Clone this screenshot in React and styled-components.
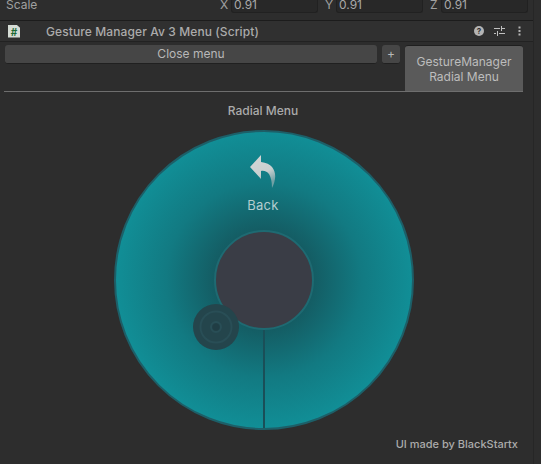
import React from "react";
import styled, { createGlobalStyle } from "styled-components";

const Global = createGlobalStyle`
  html, body {
    margin: 0;
    padding: 0;
    background: #2d2d2d;
  }
  body {
    font-family: Inter, "Noto Sans", sans-serif;
    color: #bdbdbd;
  }
`;

const Page = styled.div`
  width: 541px;
  height: 464px;
  overflow: hidden;
  background: #2d2d2d;
`;

const Panel = styled.div`
  width: 534px;
  height: 100%;
  box-sizing: border-box;
  display: flex;
  flex-direction: column;
  border-right: 1px solid #262626;
`;

const ScaleRow = styled.div`
  height: 13px;
  display: flex;
  align-items: flex-start;
  gap: 7px;
  padding: 0 5px 0 6px;
  font-size: 12px;
  line-height: 10px;
  color: #a0a0a0;
`;

const ScaleLabel = styled.span`
  flex: 1;
`;

const Axis = styled.div`
  display: flex;
  width: 98px;
`;

const AxisName = styled.span`
  width: 11px;
`;

const AxisField = styled.div`
  flex: 1;
  height: 13px;
  box-sizing: border-box;
  padding-left: 2px;
  background: #282828;
  border: 1px solid #212121;
  border-top: none;
  border-radius: 0 0 3px 3px;
  color: #a8a8a8;
`;

const Header = styled.div`
  height: 22px;
  box-sizing: border-box;
  margin-top: 7px;
  display: flex;
  align-items: center;
  padding: 0 12px 0 8px;
  background: #303030;
  border-top: 1px solid #1c1c1c;
  border-bottom: 1px solid #222222;
`;

const ScriptIcon = styled.div`
  width: 12px;
  height: 13px;
  background: #d5dcd5;
  clip-path: polygon(0 0, 70% 0, 100% 25%, 100% 100%, 0 100%);
  color: #1d6b35;
  font-size: 10px;
  font-weight: 700;
  line-height: 14px;
  text-align: center;
`;

const HeaderTitle = styled.span`
  margin-left: 26px;
  flex: 1;
  font-size: 12px;
  font-weight: 500;
  color: #ababab;
  letter-spacing: 0.1px;
`;

const HeaderIcons = styled.div`
  display: flex;
  align-items: center;
  gap: 10px;
`;

const Toolbar = styled.div`
  display: flex;
  height: 50px;
  box-sizing: border-box;
  margin: 0 10px 0 4px;
  padding: 3px 0 0 1px;
  border-bottom: 1px solid #6e6e6e;
`;

const CloseButton = styled.div`
  width: 372px;
  height: 18px;
  line-height: 18px;
  text-align: center;
  font-size: 12px;
  color: #b8b8b8;
  background: #464646;
  border-radius: 3px;
  border-bottom: 1px solid #202020;
`;

const PlusButton = styled.div`
  width: 18px;
  height: 18px;
  margin-left: 5px;
  line-height: 17px;
  text-align: center;
  font-size: 12px;
  color: #b8b8b8;
  background: #464646;
  border-radius: 3px;
  border-bottom: 1px solid #202020;
`;

const TabButton = styled.div`
  width: 118px;
  height: 46px;
  margin-left: 5px;
  box-sizing: border-box;
  padding-top: 8px;
  text-align: center;
  font-size: 12px;
  line-height: 15px;
  color: #bdbdbd;
  background: #5a5a5a;
  border-radius: 3px 3px 0 0;
  border-top: 1px solid #1f1f1f;
`;

const Heading = styled.div`
  margin-top: 11px;
  width: 526px;
  text-align: center;
  font-size: 12px;
  line-height: 15px;
  font-weight: 500;
  color: #ababab;
`;

const Stage = styled.div`
  flex: 1;
  position: relative;
`;

const Wheel = styled.div`
  position: absolute;
  left: 114px;
  top: 12px;
  width: 300px;
  height: 300px;
  box-sizing: border-box;
  border-radius: 50%;
  border: 2px solid #1d5f68;
  background: radial-gradient(circle closest-side at 50% 50%, #123f45 0%, #145c63 33%, #127a82 66%, #118e96 100%);
  overflow: hidden;
`;

const Divider = styled.div`
  position: absolute;
  left: 147px;
  top: 197px;
  bottom: 0;
  width: 2px;
  background: #1a4f58;
`;

const Hub = styled.div`
  position: absolute;
  left: 98px;
  top: 98px;
  width: 100px;
  height: 100px;
  box-sizing: border-box;
  border-radius: 50%;
  border: 2px solid #1e6a72;
  background: #3a3d46;
`;

const BackItem = styled.div`
  position: absolute;
  left: 0;
  right: 2px;
  top: 23px;
  display: flex;
  flex-direction: column;
  align-items: center;
  gap: 8px;
  font-size: 13px;
  color: #b4cdd0;
  letter-spacing: 0.3px;
`;

const Knob = styled.div`
  position: absolute;
  left: 77px;
  top: 172px;
  width: 46px;
  height: 46px;
  border-radius: 50%;
  background: #24454c;
  display: flex;
  align-items: center;
  justify-content: center;
`;

const Credit = styled.div`
  position: absolute;
  right: 15px;
  bottom: 13px;
  font-size: 11px;
  font-weight: 500;
  color: #ababab;
`;

const DotsIcon = styled.svg`
  margin-left: 3px;
`;

const BackIcon = () => (
  <svg width="30" height="34" viewBox="0 0 30 34">
    <defs>
      <linearGradient id="backFade" x1="0" y1="0" x2="0.4" y2="1">
        <stop offset="0" stopColor="#d6d6d6" />
        <stop offset="0.65" stopColor="#c9d0d0" />
        <stop offset="1" stopColor="#6fa0a4" />
      </linearGradient>
    </defs>
    <path
      d="M13 0 L2 12 L13 24 L13 16 C19 15 24 19 24 33 C29 24 30 9 13 7 Z"
      fill="url(#backFade)"
    />
  </svg>
);

const QuestionIcon = () => (
  <svg width="10" height="10" viewBox="0 0 10 10">
    <circle cx="5" cy="5" r="5" fill="#b4b4b4" />
    <text x="5" y="8" fontSize="8" fontWeight="700" textAnchor="middle" fill="#303030" fontFamily="Inter, sans-serif">?</text>
  </svg>
);

const SlidersIcon = () => (
  <svg width="11" height="10" viewBox="0 0 11 10" fill="#c0c0c0">
    <rect x="0" y="2" width="6" height="1" />
    <rect x="8" y="2" width="3" height="1" />
    <rect x="7" y="0" width="1" height="5" />
    <rect x="0" y="7" width="2" height="1" />
    <rect x="5" y="7" width="6" height="1" />
    <rect x="3" y="5" width="1" height="5" />
  </svg>
);

const KnobRings = () => (
  <svg width="46" height="46" viewBox="0 0 46 46" fill="none" stroke="#294e56">
    <circle cx="23" cy="23" r="15.5" strokeWidth="2" />
    <circle cx="23" cy="23" r="5" strokeWidth="2" />
    <circle cx="23" cy="23" r="3.5" fill="#203d44" stroke="none" />
  </svg>
);

const App = () => (
  <Page>
    <Global />
    <Panel>
      <ScaleRow>
        <ScaleLabel>Scale</ScaleLabel>
        {["X", "Y", "Z"].map((axis) => (
          <Axis key={axis}>
            <AxisName>{axis}</AxisName>
            <AxisField>0.91</AxisField>
          </Axis>
        ))}
      </ScaleRow>
      <Header>
        <ScriptIcon>#</ScriptIcon>
        <HeaderTitle>Gesture Manager Av 3 Menu (Script)</HeaderTitle>
        <HeaderIcons>
          <QuestionIcon />
          <SlidersIcon />
          <DotsIcon width="3" height="10" viewBox="0 0 3 10" fill="#b4b4b4">
            <rect x="0.5" y="0.5" width="2" height="2" />
            <rect x="0.5" y="4" width="2" height="2" />
            <rect x="0.5" y="7.5" width="2" height="2" />
          </DotsIcon>
        </HeaderIcons>
      </Header>
      <Toolbar>
        <CloseButton>Close menu</CloseButton>
        <PlusButton>+</PlusButton>
        <TabButton>
          GestureManager
          <br />
          Radial Menu
        </TabButton>
      </Toolbar>
      <Heading>Radial Menu</Heading>
      <Stage>
        <Wheel>
          <BackItem>
            <BackIcon />
            Back
          </BackItem>
          <Divider />
          <Hub />
          <Knob>
            <KnobRings />
          </Knob>
        </Wheel>
        <Credit>UI made by BlackStartx</Credit>
      </Stage>
    </Panel>
  </Page>
);

export default App;
